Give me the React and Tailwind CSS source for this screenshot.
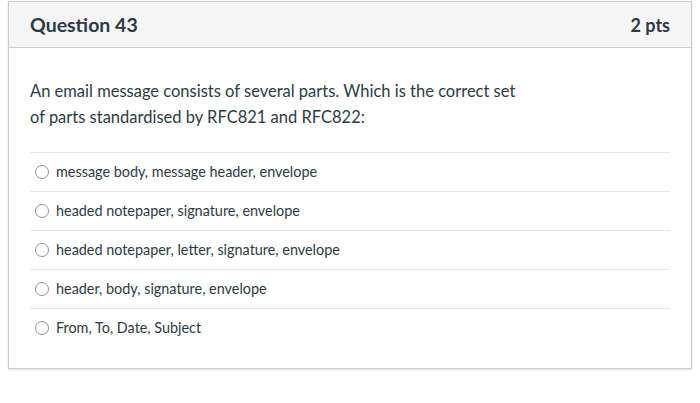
import React from 'react';

const options = [
  'message body, message header, envelope',
  'headed notepaper, signature, envelope',
  'headed notepaper, letter, signature, envelope',
  'header, body, signature, envelope',
  'From, To, Date, Subject',
];

export default function App() {
  return (
    <div className="w-[700px] h-[403px] bg-white pt-[1px] pl-[8px] font-['Lato','Liberation_Sans',sans-serif] text-[#2d3b45]">
      <div className="w-[684px] border border-[#c7cdd1] shadow-[0_1px_2px_rgba(0,0,0,0.12)]">
        <div className="h-[46px] bg-[#f5f5f5] border-b border-[#c7cdd1] px-[21px] flex items-center justify-between">
          <h2 className="text-[19.5px] font-bold leading-none">Question 43</h2>
          <span className="text-[18px] font-bold leading-none text-[#2d3b45]">2 pts</span>
        </div>
        <div className="px-[21px] pt-[30px] pb-[21px]">
          <p className="text-[16.5px] leading-[26px]">
            An email message consists of several parts. Which is the correct set
            <br />
            of parts standardised by RFC821 and RFC822:
          </p>
          <div className="mt-[22px]">
            {options.map((opt) => (
              <label key={opt} className="h-[39px] border-t border-[#e6e8ea] flex items-center pl-[5px] text-[14.4px]">
                <span className="w-[14px] h-[14px] rounded-full border border-[#8b969e] bg-white mr-[7px] shrink-0" />
                <span>{opt}</span>
              </label>
            ))}
          </div>
        </div>
      </div>
    </div>
  );
}
